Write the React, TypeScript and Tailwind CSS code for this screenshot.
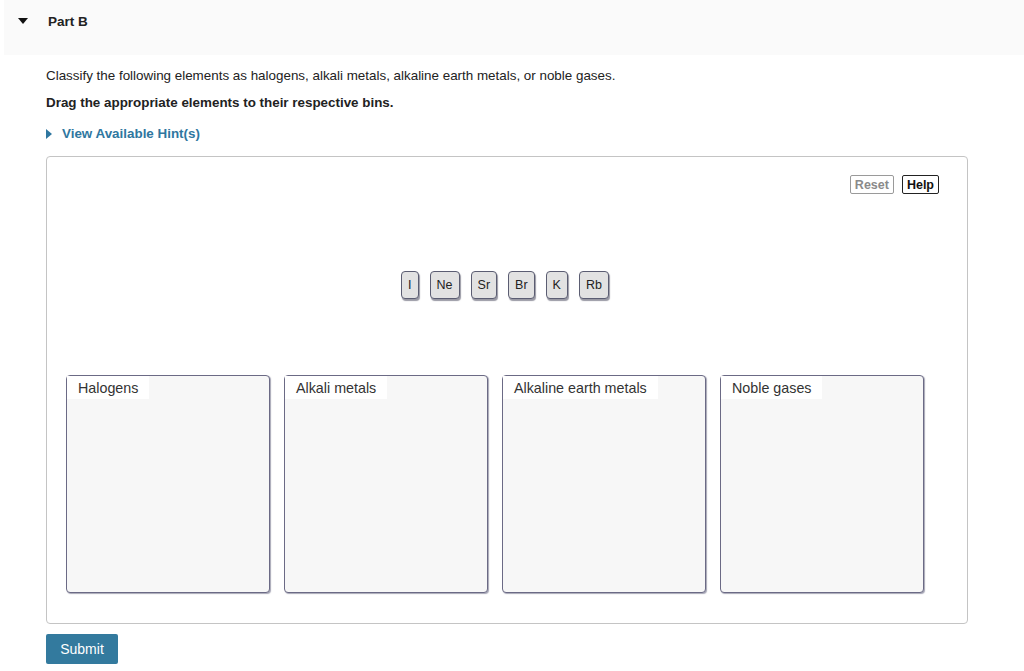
import React from 'react';

const tiles = ['I', 'Ne', 'Sr', 'Br', 'K', 'Rb'];
const bins = ['Halogens', 'Alkali metals', 'Alkaline earth metals', 'Noble gases'];

export default function App() {
  return (
    <div className="w-[1024px] h-[671px] bg-white text-[#222] font-['Liberation_Sans',Arial,sans-serif] overflow-hidden">
      {/* Part header */}
      <div className="ml-[4px] h-[55px] bg-[#fafafa] flex items-start pt-[14px]">
        <svg width="10" height="7" viewBox="0 0 10 7" className="ml-[14px] mt-[4px]">
          <polygon points="0,0 10,0 5,6" fill="#111" />
        </svg>
        <span className="ml-[20px] text-[13.5px] leading-[16px] font-bold text-[#222]">Part B</span>
      </div>

      <div className="px-[46px]">
        <p className="mt-[13px] text-[13.4px] leading-[16px]">
          Classify the following elements as halogens, alkali metals, alkaline earth metals, or noble gases.
        </p>
        <p className="mt-[11px] text-[13.4px] leading-[16px] font-bold">
          Drag the appropriate elements to their respective bins.
        </p>
        <div className="mt-[15px] flex items-center text-[#2f77a0] font-bold text-[13.4px] leading-[16px]">
          <svg width="6" height="10" viewBox="0 0 6 10" className="mt-[-1px]">
            <polygon points="0,0 6,5 0,10" fill="#2f77a0" />
          </svg>
          <span className="ml-[10px]">View Available Hint(s)</span>
        </div>

        {/* Drag-and-drop area */}
        <div className="mt-[14px] w-[922px] h-[468px] border border-[#c4c4c4] rounded-[4px] flex flex-col">
          <div className="flex justify-end gap-[8px] pt-[18px] pr-[28px]">
            <button className="h-[19px] px-[4px] border border-[#9a9a9a] rounded-[2px] bg-white text-[#8a8a8a] text-[12.5px] font-bold leading-[16px]">
              Reset
            </button>
            <button className="h-[19px] px-[4px] border border-[#222] rounded-[2px] bg-white text-[#111] text-[12.5px] font-bold leading-[16px]">
              Help
            </button>
          </div>

          <div className="mt-[77px] flex justify-center gap-[11px] pr-[4px]">
            {tiles.map(t => (
              <div
                key={t}
                className="h-[28px] px-[6px] flex items-center justify-center border-[1.5px] border-[#5b5d72] rounded-[4px] bg-[#e2e2e2] text-[12.5px] text-[#222] shadow-[1px_2px_1px_rgba(70,70,90,0.55)]"
              >
                {t}
              </div>
            ))}
          </div>

          <div className="mt-[76px] flex gap-[14px] pl-[19px]">
            {bins.map(b => (
              <div
                key={b}
                className="w-[204px] h-[218px] border border-[#6b6a85] rounded-[4px] bg-[#f7f7f7] shadow-[1px_1px_1px_rgba(80,80,110,0.5)]"
              >
                <span className="inline-block bg-white px-[11px] h-[23px] leading-[24px] text-[14.3px] text-[#333]">{b}</span>
              </div>
            ))}
          </div>
        </div>

        <button className="mt-[10px] w-[72px] h-[30px] rounded-[2px] bg-[#337a9e] text-white text-[14px] leading-[30px]">
          Submit
        </button>
      </div>
    </div>
  );
}
